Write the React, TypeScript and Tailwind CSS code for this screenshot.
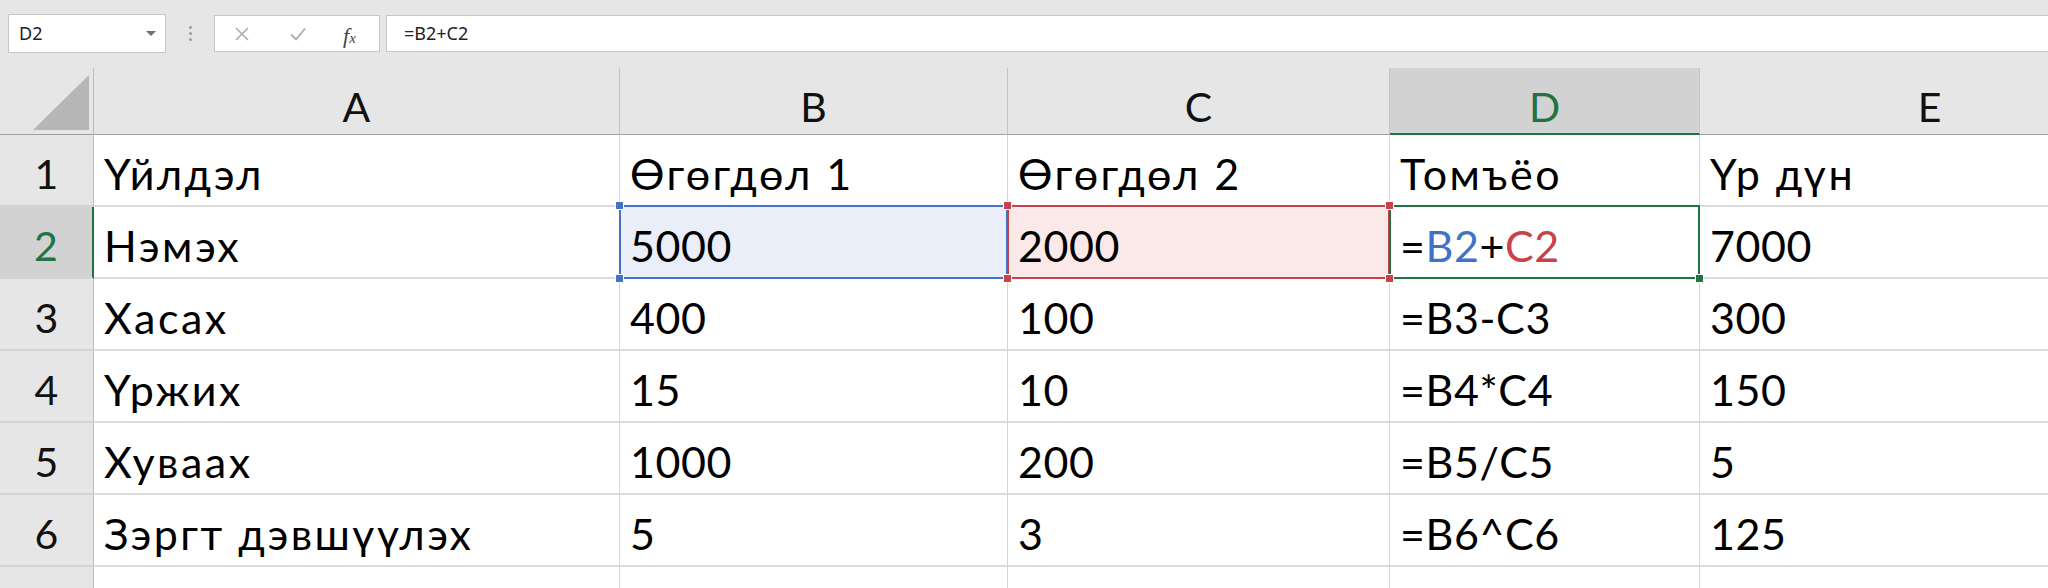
import React from "react";

type Col = { key: string; width: string };

const COLS: Col[] = [
  { key: "A", width: "w-[526px]" },
  { key: "B", width: "w-[388px]" },
  { key: "C", width: "w-[382px]" },
  { key: "D", width: "w-[310px]" },
  { key: "E", width: "w-[460px]" },
];

const ROWS: string[][] = [
  ["Үйлдэл", "Өгөгдөл 1", "Өгөгдөл 2", "Томъёо", "Үр дүн"],
  ["Нэмэх", "5000", "2000", "=B2+C2", "7000"],
  ["Хасах", "400", "100", "=B3-C3", "300"],
  ["Үржих", "15", "10", "=B4*C4", "150"],
  ["Хуваах", "1000", "200", "=B5/C5", "5"],
  ["Зэргт дэвшүүлэх", "5", "3", "=B6^C6", "125"],
];

const cellFont = { fontFamily: "Lato, 'Noto Sans', sans-serif" };

// cyrillic text in the sheet renders wider than the latin/digits
const isCyrillic = (s: string) => /[\u0400-\u04FF]/.test(s);

function Handle({ pos, color }: { pos: string; color: string }) {
  return (
    <span
      className={`absolute z-20 h-[9px] w-[9px] border border-white ${pos} ${color}`}
    />
  );
}

function Selection({ kind }: { kind: "blue" | "red" | "green" }) {
  if (kind === "green") {
    return (
      <>
        <span className="absolute -top-[2px] -left-[1px] -right-[1px] -bottom-[2px] z-10 border-2 border-[#217346] pointer-events-none" />
        <Handle pos="-right-[5px] -bottom-[6px]" color="bg-[#217346]" />
      </>
    );
  }
  const border = kind === "blue" ? "border-[#4472c4]" : "border-[#c8424a]";
  const bg = kind === "blue" ? "bg-[#4472c4]" : "bg-[#c8424a]";
  return (
    <>
      <span
        className={`absolute -top-[2px] -left-[1px] -right-[1px] -bottom-[2px] z-10 border-2 ${border} pointer-events-none`}
      />
      <Handle pos="-left-[5px] -top-[6px]" color={bg} />
      <Handle pos="-right-[5px] -top-[6px]" color={bg} />
      <Handle pos="-left-[5px] -bottom-[6px]" color={bg} />
      <Handle pos="-right-[5px] -bottom-[6px]" color={bg} />
    </>
  );
}

function Toolbar() {
  return (
    <div className="flex h-[68px] items-start bg-[#e6e6e6] pt-[14px] pl-[8px]">
      {/* name box */}
      <div className="flex h-[39px] w-[158px] items-center justify-between border border-[#c6c6c6] bg-white pl-[10px] pr-[9px]">
        <span
          className="text-[18px] text-[#222]"
          style={{ fontFamily: "'Noto Sans', sans-serif" }}
        >
          D2
        </span>
        <span className="h-0 w-0 border-x-[5px] border-t-[5px] border-x-transparent border-t-[#6f6f6f]" />
      </div>

      {/* ellipsis */}
      <div className="flex w-[48px] flex-col items-center gap-[3px] pt-[12px]">
        <span className="h-[3px] w-[3px] rounded-full bg-[#9a9a9a]" />
        <span className="h-[3px] w-[3px] rounded-full bg-[#9a9a9a]" />
        <span className="h-[3px] w-[3px] rounded-full bg-[#9a9a9a]" />
      </div>

      {/* cancel / enter / fx */}
      <div className="relative mt-[1px] flex h-[37px] w-[166px] items-center border border-[#c6c6c6] bg-white">
        <svg
          className="absolute left-[20px] top-[11px]"
          width="14"
          height="14"
          viewBox="0 0 14 14"
        >
          <path
            d="M1 1 L13 13 M13 1 L1 13"
            stroke="#ababab"
            strokeWidth="1.6"
            fill="none"
          />
        </svg>
        <svg
          className="absolute left-[75px] top-[11px]"
          width="16"
          height="14"
          viewBox="0 0 16 14"
        >
          <path
            d="M1 7.5 L6 12.5 L15 1.5"
            stroke="#ababab"
            strokeWidth="1.8"
            fill="none"
          />
        </svg>
        <span
          className="absolute left-[128px] top-[3px] text-[22px] italic text-[#444]"
          style={{ fontFamily: "'Liberation Serif', serif" }}
        >
          f<span className="text-[15px]">x</span>
        </span>
      </div>

      {/* formula input */}
      <div className="ml-[6px] mt-[1px] flex h-[37px] flex-1 items-center border border-r-0 border-[#c6c6c6] bg-white pl-[17px]">
        <span
          className="text-[18px] text-[#222]"
          style={{ fontFamily: "'Noto Sans', sans-serif" }}
        >
          =B2+C2
        </span>
      </div>
    </div>
  );
}

function HeaderRow() {
  return (
    <div className="flex h-[67px] bg-[#e6e6e6]" style={cellFont}>
      <div className="relative h-full w-[94px] shrink-0 border-r border-b border-r-[#bdbdbd] border-b-[#9e9e9e]">
        <svg
          className="absolute left-0 top-0"
          width="94"
          height="66"
          viewBox="0 0 94 66"
        >
          <polygon points="33,62 89,62 89,7" fill="#b6b6b6" />
        </svg>
      </div>
      {COLS.map((c) => {
        const active = c.key === "D";
        return (
          <div
            key={c.key}
            className={`${c.width} flex h-full shrink-0 justify-center border-r border-r-[#c4c4c4] pt-[18px] text-[41px] leading-[41px] ${
              active
                ? "border-b-2 border-b-[#217346] bg-[#d2d2d2] text-[#217346]"
                : "border-b border-b-[#9e9e9e] text-[#111]"
            }`}
          >
            {c.key}
          </div>
        );
      })}
    </div>
  );
}

function FormulaText({ text, rowIndex }: { text: string; rowIndex: number }) {
  if (rowIndex === 1) {
    return (
      <>
        =<span className="text-[#3f72c8]">B2</span>+
        <span className="text-[#c8424a]">C2</span>
      </>
    );
  }
  return <>{text}</>;
}

function DataRow({ cells, index }: { cells: string[]; index: number }) {
  const rowNum = index + 1;
  const activeRow = index === 1;
  return (
    <div className="flex h-[72px]" style={cellFont}>
      <div
        className={`flex h-full w-[94px] shrink-0 items-end justify-center border-b-2 border-b-[#d4d4d4] pb-[10px] text-[41px] leading-[42px] ${
          activeRow
            ? "border-r-2 border-r-[#217346] bg-[#d2d2d2] text-[#217346]"
            : "border-r border-r-[#bdbdbd] bg-[#e6e6e6] text-[#111]"
        }`}
      >
        {rowNum}
      </div>
      {COLS.map((c, ci) => {
        let fill = "bg-white";
        let sel: "blue" | "red" | "green" | null = null;
        if (activeRow && ci === 1) {
          fill = "bg-[#e9eef8]";
          sel = "blue";
        } else if (activeRow && ci === 2) {
          fill = "bg-[#fbe8e9]";
          sel = "red";
        } else if (activeRow && ci === 3) {
          sel = "green";
        }
        const tracking = isCyrillic(cells[ci])
          ? "tracking-[2.5px]"
          : "tracking-[0.6px]";
        return (
          <div
            key={c.key}
            className={`${c.width} ${fill} ${tracking} relative flex h-full shrink-0 items-end whitespace-nowrap border-r border-b-2 border-r-[#d6d6d6] border-b-[#dcdcdc] pb-[10px] pl-[10px] text-[43px] leading-[43px] text-black`}
          >
            {ci === 3 ? (
              <FormulaText text={cells[ci]} rowIndex={index} />
            ) : (
              cells[ci]
            )}
            {sel && <Selection kind={sel} />}
          </div>
        );
      })}
    </div>
  );
}

export default function App() {
  return (
    <div className="h-[588px] w-[2048px] overflow-hidden bg-white">
      <Toolbar />
      <HeaderRow />
      {ROWS.map((r, i) => (
        <DataRow key={i} cells={r} index={i} />
      ))}
      <div className="flex h-[30px]">
        <div className="h-full w-[94px] shrink-0 border-r border-r-[#bdbdbd] bg-[#e6e6e6]" />
        {COLS.map((c) => (
          <div
            key={c.key}
            className={`${c.width} h-full shrink-0 border-r border-r-[#d6d6d6] bg-white`}
          />
        ))}
      </div>
    </div>
  );
}
